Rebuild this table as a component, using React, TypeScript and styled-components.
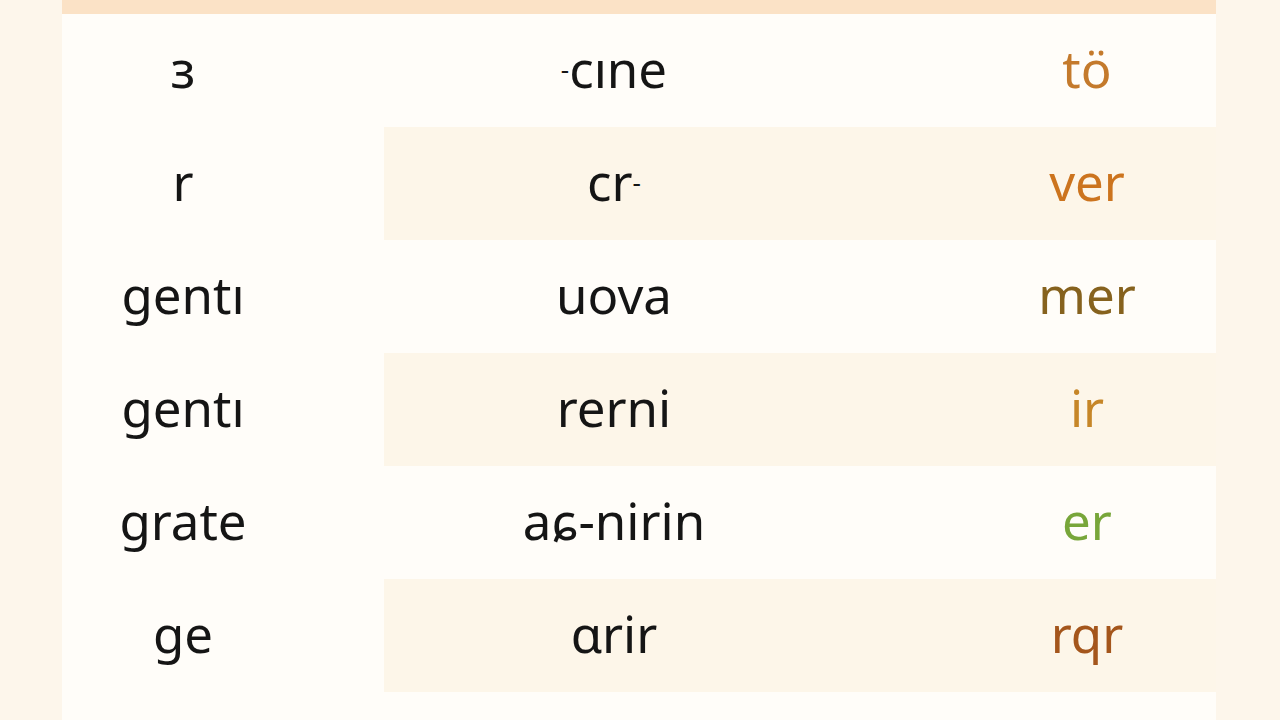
import React from 'react';
import styled, { createGlobalStyle } from 'styled-components';

const GlobalStyle = createGlobalStyle`
  html, body {
    margin: 0;
    padding: 0;
    background: #fdf6eb;
    font-family: 'Noto Sans', 'Open Sans', sans-serif;
  }
`;

const Page = styled('div')`
  width: 1280px;
  height: 720px;
  overflow: hidden;
  padding: 0 64px 0 62px;
  box-sizing: border-box;
`;

const Table = styled('div')`
  display: grid;
  grid-template-columns: 322px 460px 1fr;
`;

const HeaderBar = styled('div')`
  grid-column: 1 / -1;
  height: 14px;
  background: #fbe2c6;
`;

const Cell = styled('div')<{ $striped?: boolean; $col: number }>`
  height: 113px;
  display: flex;
  align-items: center;
  justify-content: center;
  box-sizing: border-box;
  padding-right: ${(p) => (p.$col === 0 ? '80px' : '0')};
  padding-left: ${(p) => (p.$col === 2 ? '114px' : '0')};
  padding-bottom: 4px;
  background: ${(p) => (p.$striped && p.$col > 0 ? '#fdf6e9' : '#fffdf9')};
  font-size: 51px;
  line-height: 1;
  color: #151515;
`;

const Mark = styled('span')`
  font-size: 26px;
  vertical-align: 14px;
`;

const Tag = styled('span')<{ $color: string }>`
  color: ${(p) => p.$color};
`;

const rows = [
  { a: 'з', b: <><Mark>-</Mark>cıne</>, c: 'tö', color: '#c47a2c' },
  { a: 'r', b: <>cr<Mark>-</Mark></>, c: 'ver', color: '#cc741e' },
  { a: 'gentı', b: 'uova', c: 'mer', color: '#86621e' },
  { a: 'gentı', b: 'rerni', c: 'ir', color: '#c68628' },
  { a: 'grate', b: 'aɕ-nirin', c: 'er', color: '#78a63a' },
  { a: 'ge', b: 'ɑrir', c: 'rqr', color: '#a4561c' },
  { a: '', b: '', c: '', color: '#151515' },
];

const App: React.FC = () => {
  return (
    <>
      <GlobalStyle />
      <Page>
        <Table>
          <HeaderBar />
          {rows.map((row, i) => (
            <React.Fragment key={i}>
              <Cell $col={0} $striped={i % 2 === 1}>
                {row.a}
              </Cell>
              <Cell $col={1} $striped={i % 2 === 1}>
                {row.b}
              </Cell>
              <Cell $col={2} $striped={i % 2 === 1}>
                <Tag $color={row.color}>{row.c}</Tag>
              </Cell>
            </React.Fragment>
          ))}
        </Table>
      </Page>
    </>
  );
};

export default App;
